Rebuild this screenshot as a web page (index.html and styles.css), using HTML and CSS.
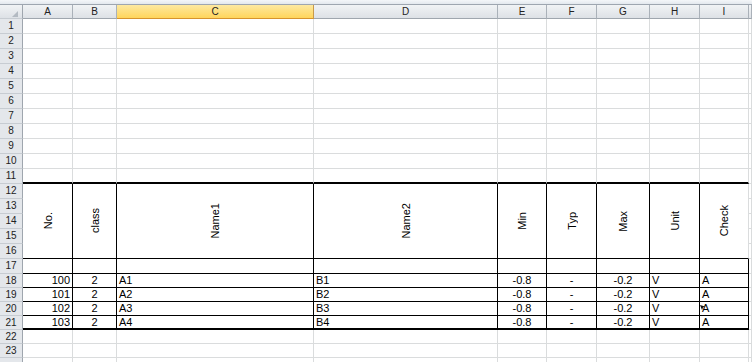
FILE: index.html
```html
<!DOCTYPE html>
<html>
  <head>
    <link rel="stylesheet" href="styles.css">
  </head>
  <body>
    <div class="topbar"></div>

    <div class="row colhead">
      <div class="rh corner">
        <svg class="tri" width="6" height="6" viewBox="0 0 6 6"><polygon points="6,0 6,6 0,6" /></svg>
      </div>
      <div class="a">A</div><div class="b">B</div><div class="c sel">C</div><div class="d">D</div><div class="e">E</div>
      <div class="f">F</div><div class="g">G</div><div class="h">H</div><div class="i">I</div><div class="j"></div>
    </div>

    <div class="row"><div class="rh">1</div><div class="a"></div><div class="b"></div><div class="c"></div><div class="d"></div><div class="e"></div><div class="f"></div><div class="g"></div><div class="h"></div><div class="i"></div><div class="j"></div></div>
    <div class="row"><div class="rh">2</div><div class="a"></div><div class="b"></div><div class="c"></div><div class="d"></div><div class="e"></div><div class="f"></div><div class="g"></div><div class="h"></div><div class="i"></div><div class="j"></div></div>
    <div class="row"><div class="rh">3</div><div class="a"></div><div class="b"></div><div class="c"></div><div class="d"></div><div class="e"></div><div class="f"></div><div class="g"></div><div class="h"></div><div class="i"></div><div class="j"></div></div>
    <div class="row"><div class="rh">4</div><div class="a"></div><div class="b"></div><div class="c"></div><div class="d"></div><div class="e"></div><div class="f"></div><div class="g"></div><div class="h"></div><div class="i"></div><div class="j"></div></div>
    <div class="row"><div class="rh">5</div><div class="a"></div><div class="b"></div><div class="c"></div><div class="d"></div><div class="e"></div><div class="f"></div><div class="g"></div><div class="h"></div><div class="i"></div><div class="j"></div></div>
    <div class="row"><div class="rh">6</div><div class="a"></div><div class="b"></div><div class="c"></div><div class="d"></div><div class="e"></div><div class="f"></div><div class="g"></div><div class="h"></div><div class="i"></div><div class="j"></div></div>
    <div class="row"><div class="rh">7</div><div class="a"></div><div class="b"></div><div class="c"></div><div class="d"></div><div class="e"></div><div class="f"></div><div class="g"></div><div class="h"></div><div class="i"></div><div class="j"></div></div>
    <div class="row"><div class="rh">8</div><div class="a"></div><div class="b"></div><div class="c"></div><div class="d"></div><div class="e"></div><div class="f"></div><div class="g"></div><div class="h"></div><div class="i"></div><div class="j"></div></div>
    <div class="row"><div class="rh">9</div><div class="a"></div><div class="b"></div><div class="c"></div><div class="d"></div><div class="e"></div><div class="f"></div><div class="g"></div><div class="h"></div><div class="i"></div><div class="j"></div></div>
    <div class="row"><div class="rh">10</div><div class="a"></div><div class="b"></div><div class="c"></div><div class="d"></div><div class="e"></div><div class="f"></div><div class="g"></div><div class="h"></div><div class="i"></div><div class="j"></div></div>
    <div class="row top"><div class="rh">11</div><div class="a"></div><div class="b"></div><div class="c"></div><div class="d"></div><div class="e"></div><div class="f"></div><div class="g"></div><div class="h"></div><div class="i"></div><div class="j"></div></div>

    <!-- rows 12-16 are merged into one header cell per column -->
    <div class="row merged">
      <div class="rh stack"><div>12</div><div>13</div><div>14</div><div>15</div><div>16</div></div>
      <div class="a t"><span class="rot">No.</span></div>
      <div class="b t"><span class="rot">class</span></div>
      <div class="c t"><span class="rot">Name1</span></div>
      <div class="d t"><span class="rot">Name2</span></div>
      <div class="e t"><span class="rot">Min</span></div>
      <div class="f t"><span class="rot">Typ</span></div>
      <div class="g t"><span class="rot">Max</span></div>
      <div class="h t"><span class="rot">Unit</span></div>
      <div class="i t last"><span class="rot">Check</span></div>
      <div class="j stack"><div></div><div></div><div></div><div></div><div></div></div>
    </div>

    <div class="row tbl"><div class="rh">17</div><div class="a"></div><div class="b"></div><div class="c"></div><div class="d"></div><div class="e"></div><div class="f"></div><div class="g"></div><div class="h"></div><div class="i"></div><div class="j"></div></div>

    <div class="row tbl data"><div class="rh">18</div><div class="a num">100</div><div class="b mid">2</div><div class="c txt">A1</div><div class="d txt">B1</div><div class="e mid">-0.8</div><div class="f mid">-</div><div class="g mid">-0.2</div><div class="h txt">V</div><div class="i txt">A</div><div class="j"></div></div>
    <div class="row tbl data"><div class="rh">19</div><div class="a num">101</div><div class="b mid">2</div><div class="c txt">A2</div><div class="d txt">B2</div><div class="e mid">-0.8</div><div class="f mid">-</div><div class="g mid">-0.2</div><div class="h txt">V</div><div class="i txt">A</div><div class="j"></div></div>
    <div class="row tbl data"><div class="rh">20</div><div class="a num">102</div><div class="b mid">2</div><div class="c txt">A3</div><div class="d txt">B3</div><div class="e mid">-0.8</div><div class="f mid">-</div><div class="g mid">-0.2</div><div class="h txt">V</div>
      <div class="i txt mark">A<svg class="pointer" width="5" height="5" viewBox="0 0 5 5"><polygon points="0,0 5,1.5 3,2.5 2,5" /></svg></div><div class="j"></div></div>
    <div class="row tbl data end"><div class="rh">21</div><div class="a num">103</div><div class="b mid">2</div><div class="c txt">A4</div><div class="d txt">B4</div><div class="e mid">-0.8</div><div class="f mid">-</div><div class="g mid">-0.2</div><div class="h txt">V</div><div class="i txt">A</div><div class="j"></div></div>

    <div class="row short"><div class="rh">22</div><div class="a"></div><div class="b"></div><div class="c"></div><div class="d"></div><div class="e"></div><div class="f"></div><div class="g"></div><div class="h"></div><div class="i"></div><div class="j"></div></div>
    <div class="row short"><div class="rh">23</div><div class="a"></div><div class="b"></div><div class="c"></div><div class="d"></div><div class="e"></div><div class="f"></div><div class="g"></div><div class="h"></div><div class="i"></div><div class="j"></div></div>
    <div class="row short"><div class="rh"></div><div class="a"></div><div class="b"></div><div class="c"></div><div class="d"></div><div class="e"></div><div class="f"></div><div class="g"></div><div class="h"></div><div class="i"></div><div class="j"></div></div>
  </body>
</html>
```

FILE: styles.css
```css
body {
  margin: 0;
  width: 752px;
  height: 362px;
  overflow: hidden;
  background: #fff;
  font-family: "Liberation Sans", Arial, sans-serif;
  font-size: 11px;
  color: #000;
}

.topbar {
  height: 4px;
  background: linear-gradient(#f4f6f9, #e3e8ee);
  border-bottom: 1px solid #9ea6b0;
}

.row {
  display: flex;
  height: 15px;
}

.row > div {
  box-sizing: border-box;
  flex: none;
  height: 100%;
  border-right: 1px solid #dadcdd;
  border-bottom: 1px solid #dadcdd;
  line-height: 13px;
  white-space: nowrap;
}

/* column widths, right gridline included */
.rh { width: 23px; }
.a { width: 50px; }
.b { width: 44px; }
.c { width: 197px; }
.d { width: 184px; }
.e { width: 49px; }
.f { width: 50px; }
.g { width: 53px; }
.h { width: 50px; }
.i { width: 49px; }
.row > .j { flex: 1 1 auto; }

/* row numbers */
.row > .rh {
  background: #e4e7eb;
  border-right: 1px solid #9fa6ae;
  border-bottom: 1px solid #c7ccd2;
  font-size: 10px;
  line-height: 14px;
  color: #222;
  text-align: center;
}

/* column letters */
.colhead {
  height: 14px;
}

.colhead > div {
  background: linear-gradient(#f1f3f5, #dde1e6);
  border-right: 1px solid #aab1b9;
  border-bottom: 1px solid #9fa6ae;
  font-size: 10px;
  line-height: 13px;
  text-align: center;
  color: #222;
}

.colhead > .corner {
  position: relative;
  background: linear-gradient(#f1f3f5, #dde1e6);
}

.tri {
  position: absolute;
  left: 12px;
  top: 6px;
  fill: #b3bac2;
}

.colhead > .sel {
  background: linear-gradient(#fde9a1, #ffd55c);
  border-right: 1px solid #c89a4a;
  border-bottom: 1px solid #d6942e;
}

/* thick border under row 11 */
.top > div:not(.rh):not(.j) {
  border-bottom: 2px solid #000;
}

/* merged header rows 12-16 */
.merged {
  height: 75px;
}

.row > .stack {
  border: none;
  display: flex;
  flex-direction: column;
}

.stack > div {
  box-sizing: border-box;
  height: 15px;
  border-right: 1px solid #dadcdd;
  border-bottom: 1px solid #dadcdd;
}

.row > .rh.stack {
  border: none;
}

.rh.stack > div {
  border-right: 1px solid #9fa6ae;
  border-bottom: 1px solid #c7ccd2;
}

.row > .t {
  border-right: 1px solid #000;
  border-bottom: 1px solid #000;
  display: flex;
  align-items: center;
  justify-content: center;
}

.row > .t.last {
  border-right-color: #dadcdd;
}

.rot {
  writing-mode: vertical-rl;
  transform: rotate(180deg);
  line-height: 12px;
}

/* table body rows */
.tbl > div:not(.rh):not(.j) {
  border-right: 1px solid #000;
  border-bottom: 1px solid #000;
}

.tbl > .i:not(.rh) {
  border-right-color: #dadcdd;
}

.data,
.short {
  height: 14px;
}

.end > div:not(.rh):not(.j) {
  border-bottom: 2px solid #000;
}

.num {
  text-align: right;
  padding-right: 2px;
}

.mid {
  text-align: center;
}

.txt {
  padding-left: 2px;
}

.mark {
  position: relative;
}

.pointer {
  position: absolute;
  left: 0;
  top: 3px;
  fill: #111;
}
```
